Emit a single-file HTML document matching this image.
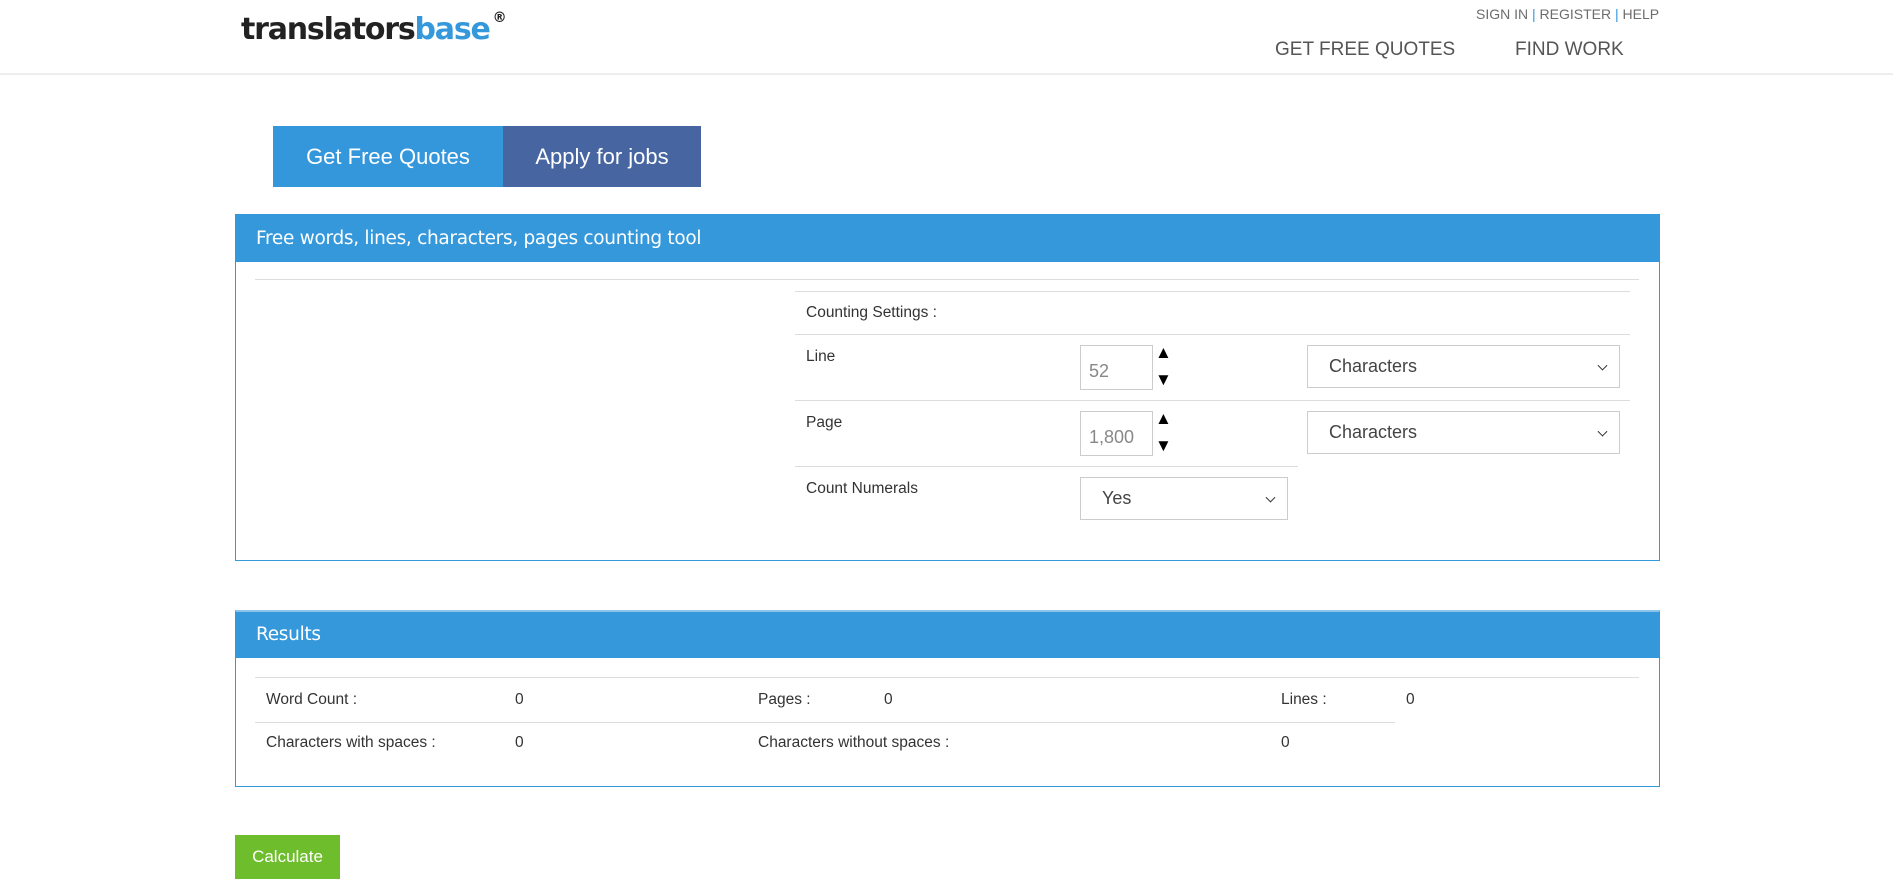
<!DOCTYPE html>
<html><head><meta charset="utf-8"><style>
*{box-sizing:border-box;margin:0;padding:0}
body{width:1893px;height:888px;background:#fff;font-family:"Liberation Sans",Arial,sans-serif;color:#333;position:relative;overflow:hidden}
.a{position:absolute;white-space:nowrap}
.hdr{position:absolute;left:0;top:0;width:1893px;height:75px;border-bottom:2px solid #eee}
.logo{left:241px;top:12px;font-family:"DejaVu Sans",sans-serif;font-size:30px;font-weight:bold;letter-spacing:-1.2px;color:#222}
.logo span{color:#3598db}
.logo sup{font-size:14px;color:#222;position:relative;top:-6px;margin-left:3px}
.top{top:6px;font-size:14px;color:#6d6d6d}
.top i{font-style:normal;color:#3598db}
.nav{top:39px;font-size:19px;color:#555}
.tab{top:126px;height:61px;color:#fff;font-size:22px;display:flex;align-items:center;justify-content:center}
.panel{position:absolute;left:235px;width:1425px;border:1px solid #3598db}
.ph{height:47px;background:#3598db;color:#fff;font-family:"DejaVu Sans",sans-serif;font-size:18.5px;letter-spacing:-0.3px;padding-left:20px;line-height:47px}
.ln{position:absolute;height:1px;background:#ddd}
.lb{font-size:15.5px;color:#333}
.box{position:absolute;border:1px solid #ccc;background:#fff}
.sel{font-size:18px;color:#444;padding-left:21px;display:flex;align-items:center}
.sel:after{content:"";position:absolute;right:13px;top:50%;width:6px;height:6px;border-right:1.5px solid #333;border-bottom:1.5px solid #333;transform:translateY(-70%) rotate(45deg)}
.num{font-size:18px;color:#888;padding-left:8px;padding-top:15px}
.arr{font-size:17px;color:#000}
</style></head><body>
<div class="hdr"></div>
<div class="a logo">translators<span>base</span><sup>®</sup></div>
<div class="a top" style="left:1476px">SIGN IN <i>|</i> REGISTER <i>|</i> HELP</div>
<div class="a nav" style="left:1275px">GET FREE QUOTES</div>
<div class="a nav" style="left:1515px">FIND WORK</div>

<div class="a tab" style="left:273px;width:230px;background:#3597db">Get Free Quotes</div>
<div class="a tab" style="left:503px;width:198px;background:#4765a0">Apply for jobs</div>

<div class="panel" style="top:214px;height:347px"><div class="ph">Free words, lines, characters, pages counting tool</div></div>
<div class="ln" style="left:255px;width:1384px;top:279px"></div>
<div class="ln" style="left:795px;width:835px;top:291px"></div>
<div class="ln" style="left:795px;width:835px;top:334px"></div>
<div class="ln" style="left:795px;width:835px;top:400px"></div>
<div class="ln" style="left:795px;width:503px;top:466px"></div>
<div class="a lb" style="left:806px;top:304px">Counting Settings :</div>
<div class="a lb" style="left:806px;top:348px">Line</div>
<div class="a lb" style="left:806px;top:414px">Page</div>
<div class="a lb" style="left:806px;top:480px">Count Numerals</div>
<div class="box num" style="left:1080px;top:345px;width:73px;height:45px">52</div>
<div class="box num" style="left:1080px;top:411px;width:73px;height:45px">1,800</div>
<div class="a arr" style="left:1155px;top:343px">▲</div>
<div class="a arr" style="left:1155px;top:370px">▼</div>
<div class="a arr" style="left:1155px;top:409px">▲</div>
<div class="a arr" style="left:1155px;top:436px">▼</div>
<div class="box sel" style="left:1307px;top:345px;width:313px;height:43px">Characters</div>
<div class="box sel" style="left:1307px;top:411px;width:313px;height:43px">Characters</div>
<div class="box sel" style="left:1080px;top:477px;width:208px;height:43px">Yes</div>

<div class="panel" style="top:610px;height:177px;border-top:2px solid #8cc4ea"><div class="ph" style="height:46px;line-height:46px">Results</div></div>
<div class="ln" style="left:255px;width:1384px;top:677px"></div>
<div class="ln" style="left:255px;width:1140px;top:722px"></div>
<div class="a lb" style="left:266px;top:691px">Word Count :</div>
<div class="a lb" style="left:515px;top:691px">0</div>
<div class="a lb" style="left:758px;top:691px">Pages :</div>
<div class="a lb" style="left:884px;top:691px">0</div>
<div class="a lb" style="left:1281px;top:691px">Lines :</div>
<div class="a lb" style="left:1406px;top:691px">0</div>
<div class="a lb" style="left:266px;top:734px">Characters with spaces :</div>
<div class="a lb" style="left:515px;top:734px">0</div>
<div class="a lb" style="left:758px;top:734px">Characters without spaces :</div>
<div class="a lb" style="left:1281px;top:734px">0</div>

<div class="a" style="left:235px;top:835px;width:105px;height:44px;background:#6dbd2c;color:#fff;font-size:17px;display:flex;align-items:center;justify-content:center">Calculate</div>
</body></html>
